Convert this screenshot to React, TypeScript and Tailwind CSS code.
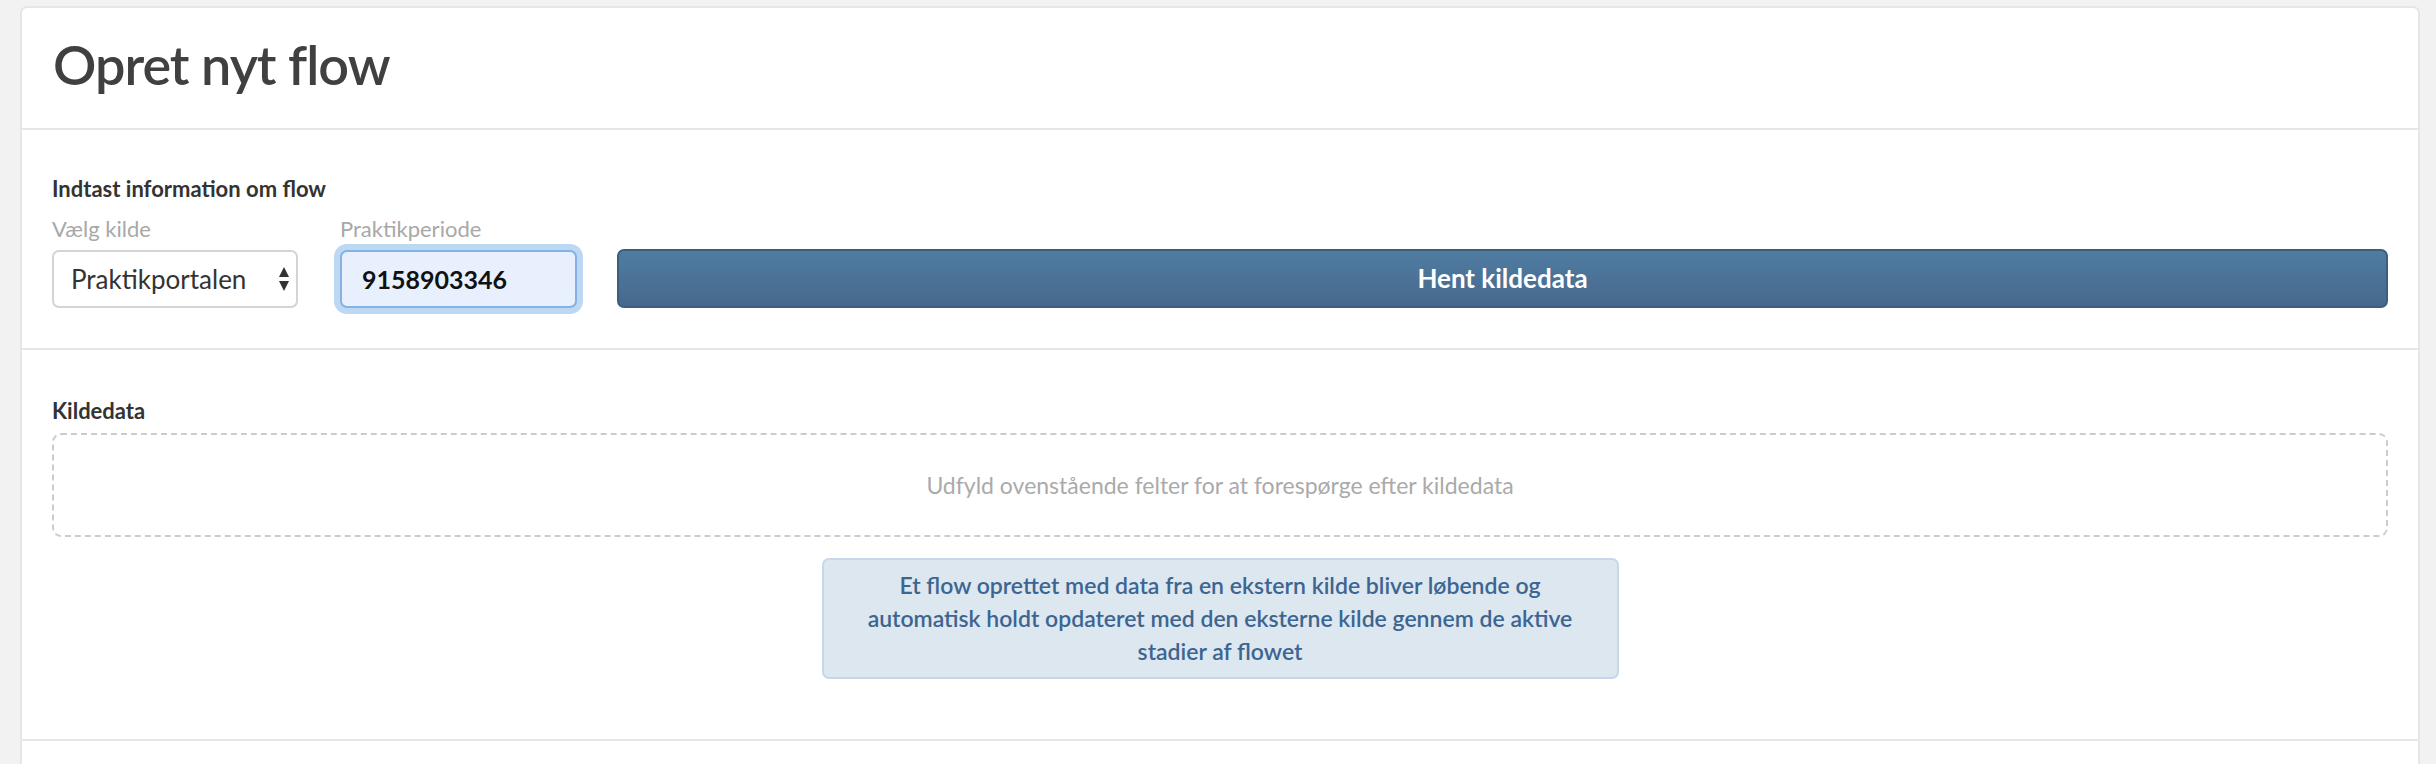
import React from 'react';

const font = { fontFamily: 'Lato, "Noto Sans", sans-serif' };

function SourceSelect() {
  return (
    <div className="relative w-[246px] h-[58px]">
      <select
        defaultValue="praktikportalen"
        className="appearance-none w-full h-full rounded-[7px] border-2 border-[#d4d4d4] bg-white pl-[17px] pr-[40px] text-[26px] text-[#333333] outline-none"
        style={font}
      >
        <option value="praktikportalen">Praktikportalen</option>
      </select>
      {/* up/down arrows drawn over the select */}
      <svg
        className="absolute right-[9px] top-[17px] pointer-events-none"
        width="10"
        height="24"
        viewBox="0 0 10 24"
      >
        <path d="M5 0 L10 10 L0 10 Z" fill="#333333" />
        <path d="M0 14 L10 14 L5 24 Z" fill="#333333" />
      </svg>
    </div>
  );
}

export default function App() {
  return (
    <div className="min-h-screen bg-[#f2f2f2] pl-[20px] pr-[16px] pt-[6px]" style={font}>
      <div className="bg-white border-2 border-[#e6e6e6] rounded-[7px] min-h-[800px]">
        {/* header */}
        <div className="px-[31px] pt-[25px] pb-[31px] border-b-2 border-[#e6e6e6]">
          <h1 className="text-[54px] leading-[64px] font-semibold tracking-[-1px] text-[#404040]">Opret nyt flow</h1>
        </div>

        {/* input section */}
        <div className="px-[30px] pt-[45px] pb-[40px] border-b-2 border-[#e6e6e6]">
          <div className="text-[22px] leading-[28px] font-bold text-[#333333]">
            Indtast information om flow
          </div>
          <div className="flex items-end">
            <div className="flex flex-col">
              <label className="text-[22px] leading-[28px] text-[#a8a8a8] mt-[12px] mb-[7px]">Vælg kilde</label>
              <SourceSelect />
            </div>
            <div className="flex flex-col ml-[42px]">
              <label className="text-[22px] leading-[28px] text-[#a8a8a8] mb-[7px]">Praktikperiode</label>
              <input
                readOnly
                value="9158903346"
                className="w-[237px] h-[58px] rounded-[7px] border-2 border-[#82b3e4] bg-[#e8f0fe] pl-[20px] text-[25px] font-bold text-[#111111] outline-none shadow-[0_0_0_6px_#bcd8f3]"
                style={font}
              />
            </div>
            <button
              className="ml-[40px] flex-1 h-[59px] rounded-[7px] border-2 border-[#3c5e80] bg-gradient-to-b from-[#507ca2] to-[#46698b] text-white text-[26px] font-bold"
              style={font}
            >
              Hent kildedata
            </button>
          </div>
        </div>

        {/* source data section */}
        <div className="px-[30px] pt-[47px] pb-[60px] border-b-2 border-[#e6e6e6]">
          <div className="text-[22px] leading-[28px] font-bold text-[#333333] mb-[8px]">Kildedata</div>
          <div className="h-[104px] rounded-[9px] border-2 border-dashed border-[#cccccc] flex items-center justify-center">
            <span className="text-[23px] text-[#aaaaaa]">Udfyld ovenstående felter for at forespørge efter kildedata</span>
          </div>
          <div className="flex justify-center mt-[21px]">
            <div className="w-[797px] rounded-[7px] border-2 border-[#c6d7e8] bg-[#dde7f0] px-[40px] py-[9px] text-center text-[23px] leading-[33px] font-semibold text-[#3c6591]">
              Et flow oprettet med data fra en ekstern kilde bliver løbende og automatisk holdt opdateret med den eksterne kilde gennem de aktive stadier af flowet
            </div>
          </div>
        </div>
      </div>
    </div>
  );
}
